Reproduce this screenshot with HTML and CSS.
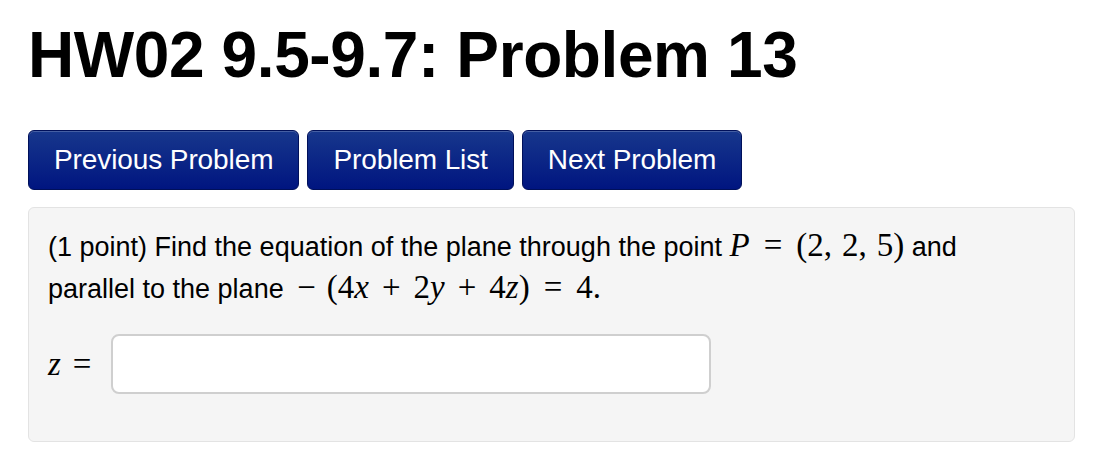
FILE: index.html
```html
<!DOCTYPE html>
<html>
<head>
<meta charset="utf-8">
<link rel="stylesheet" href="styles.css">
</head>
<body>
<h1 class="title">HW02 9.5-9.7: Problem 13</h1>
<div class="nav">
  <a class="btn">Previous Problem</a>
  <a class="btn">Problem List</a>
  <a class="btn">Next Problem</a>
</div>
<div class="problem">
  <p class="text">(1 point) Find the equation of the plane through the point <span class="m"><i>P</i><span class="rel">=</span>(2,<span class="th"></span>2,<span class="th"></span>5)</span> and parallel to the plane <span class="m"><span class="neg">&minus;</span>(4<i>x</i><span class="bin">+</span>2<i>y</i><span class="bin">+</span>4<i>z</i>)<span class="rel">=</span>4.</span></p>
  <div class="answer">
    <span class="m lbl"><i>z</i><span class="rel">=</span></span>
    <input class="field" type="text">
  </div>
</div>
</body>
</html>
```
FILE: styles.css
```css
html, body {
  margin: 0;
  background: #fff;
}
body {
  padding: 0 28px;
  font-family: "Liberation Sans", Arial, sans-serif;
  color: #000;
}
.title {
  margin: 0;
  padding-top: 17px;
  font-size: 64px;
  line-height: 76px;
  font-weight: bold;
  letter-spacing: -0.4px;
}
.nav {
  display: flex;
  gap: 8px;
  margin-top: 37px;
}
.btn {
  display: flex;
  align-items: center;
  height: 58px;
  padding: 0 25px;
  border: 1px solid #00105a;
  border-radius: 6px;
  background: linear-gradient(#17378c, #001580);
  color: #fff;
  font-size: 28px;
  letter-spacing: -0.1px;
  box-shadow: inset 0 1px 0 rgba(255,255,255,0.2);
}
.problem {
  margin-top: 17px;
  width: 1047px;
  box-sizing: border-box;
  height: 235px;
  background: #f5f5f5;
  border: 1px solid #e3e3e3;
  border-radius: 6px;
  padding: 18px 40px 18px 19px;
}
.text {
  margin: 0;
  font-size: 27px;
  line-height: 42px;
}
.m {
  font-family: "Liberation Serif", "Times New Roman", serif;
  font-size: 33px;
  line-height: 30px;
  white-space: nowrap;
}
.m i {
  font-style: italic;
}
.rel {
  padding: 0 14px;
}
.bin {
  padding: 0 13px;
}
.th {
  display: inline-block;
  width: 10px;
}
.neg {
  padding: 0 11px 0 6px;
}
.answer {
  display: flex;
  align-items: center;
  gap: 20px;
  margin-top: 24px;
}
.lbl .rel {
  padding-right: 0;
  padding-left: 12px;
}
.field {
  width: 600px;
  height: 60px;
  box-sizing: border-box;
  border: 2px solid #cfcfcf;
  border-radius: 8px;
  background: #fff;
  margin: 0;
}
```
